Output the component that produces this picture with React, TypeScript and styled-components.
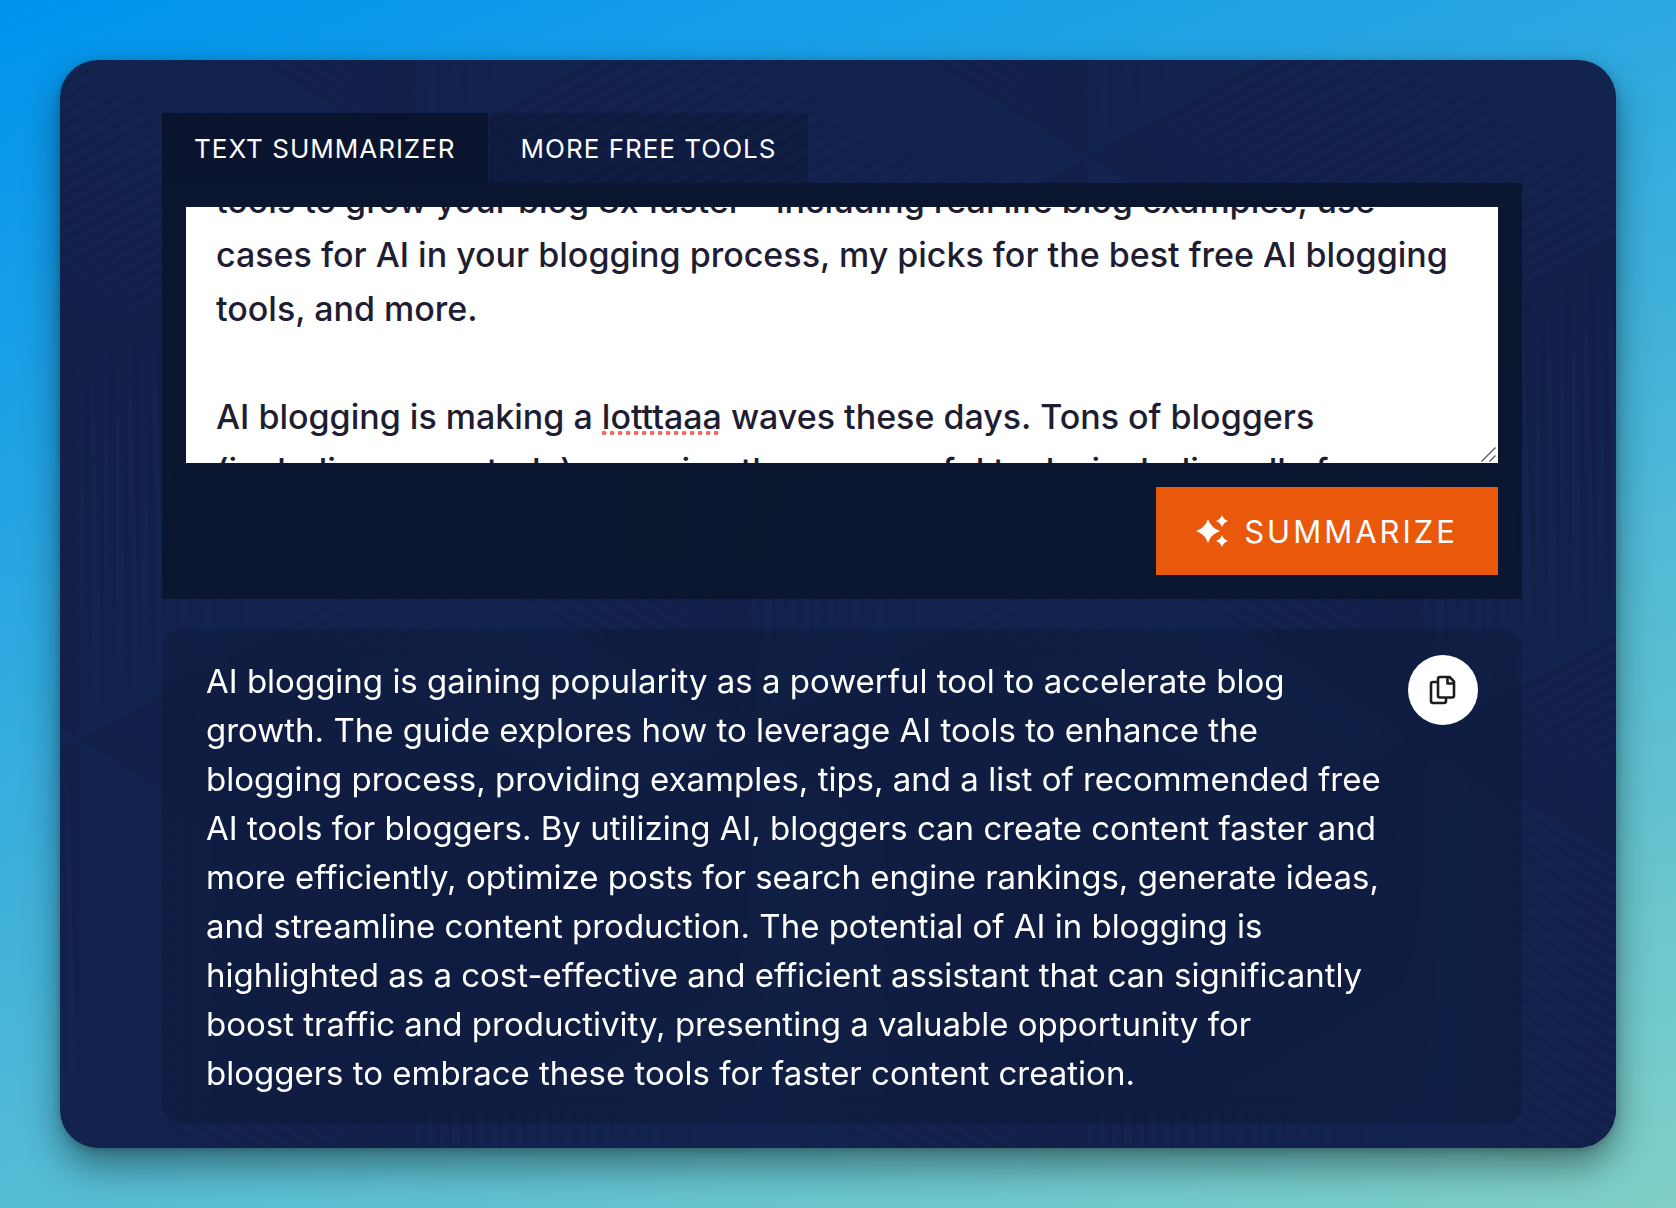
import React, { useLayoutEffect, useRef, useState } from "react";
import styled, { createGlobalStyle } from "styled-components";

const GlobalStyle = createGlobalStyle`
  *, *::before, *::after { box-sizing: border-box; }
  body {
    margin: 0;
    font-family: Inter, "Liberation Sans", sans-serif;
  }
`;

const Page = styled.div`
  min-height: 100vh;
  padding: 60px;
  background: linear-gradient(160deg, #0093ee 0%, #80d0c7 100%);
`;

const Card = styled.main`
  position: relative;
  padding: 53px 94px 24px 102px;
  border-radius: 38px;
  background: #13234f;
  box-shadow: 0 18px 36px rgba(0, 0, 0, 0.42), 0 2px 8px rgba(0, 0, 0, 0.2);
`;

const Backdrop = styled.svg`
  position: absolute;
  inset: 0;
  width: 100%;
  height: 100%;
  border-radius: 38px;
`;

const Content = styled.div`
  position: relative;
`;

const Tabs = styled.nav`
  display: flex;
  gap: 1px;
`;

const Tab = styled.a<{ $active?: boolean }>`
  padding: 2px 32px 0;
  font-size: 26px;
  line-height: 68px;
  letter-spacing: 1px;
  text-transform: uppercase;
  text-decoration: none;
  white-space: nowrap;
  color: #fff;
  background: ${(p) => (p.$active ? "rgba(4, 10, 22, 0.55)" : "rgba(4, 12, 20, 0.18)")};
`;

const Panel = styled.form`
  display: flex;
  flex-direction: column;
  align-items: flex-end;
  gap: 24px;
  padding: 24px;
  background: rgba(4, 12, 20, 0.5);
  backdrop-filter: blur(20px);
`;

const Editor = styled.div`
  position: relative;
  width: 100%;
  overflow: hidden;
  background: #fff;
`;

const Source = styled.textarea`
  display: block;
  width: 100%;
  height: 256px;
  padding: 24px 30px;
  border: 0;
  outline: 0;
  resize: vertical;
  scrollbar-width: none;
  font-family: inherit;
  font-size: 34px;
  font-weight: 500;
  line-height: 54px;
  color: #201d33;
  background: transparent;
`;

const SpellingMark = styled.span`
  position: absolute;
  height: 4px;
  background: radial-gradient(circle at 2px 2px, #ee6f6a 2px, transparent 3px) 0 0 / 8px 4px repeat-x;
  pointer-events: none;
`;

const Grip = styled.svg`
  position: absolute;
  right: 0;
  bottom: 0;
  background: #fff;
  pointer-events: none;
`;

const SubmitButton = styled.button`
  display: flex;
  align-items: center;
  gap: 16px;
  height: 88px;
  padding: 0 40px;
  border: 0;
  font-family: inherit;
  font-size: 31px;
  letter-spacing: 3px;
  text-transform: uppercase;
  color: #fff;
  background: #ea580c;
  cursor: pointer;
`;

const Result = styled.section`
  display: flex;
  align-items: flex-start;
  justify-content: space-between;
  gap: 16px;
  margin-top: 30px;
  padding: 26px 44px;
  border-radius: 20px;
  background: rgba(4, 12, 20, 0.16);
  backdrop-filter: blur(14px);
`;

const Summary = styled.p`
  margin: 0;
  padding-top: 2px;
  font-size: 33px;
  line-height: 49px;
  color: #fff;
`;

const CopyButton = styled.button`
  display: flex;
  flex: none;
  align-items: center;
  justify-content: center;
  width: 70px;
  height: 70px;
  padding: 0;
  border: 0;
  border-radius: 50%;
  color: #1c1c1e;
  background: #fff;
  cursor: pointer;
`;

const HALF = 336;
const RISE = 194;
const STRIPES = 27;

type Point = [number, number];

// Tapered stripes running from the shaded edge (a-b) to the lit edge (c-d).
function stripes(a: Point, b: Point, c: Point, d: Point): string {
  const at = (p: Point, q: Point, t: number) =>
    `${(p[0] + (q[0] - p[0]) * t).toFixed(1)} ${(p[1] + (q[1] - p[1]) * t).toFixed(1)}`;
  let path = "";
  for (let i = 0; i < STRIPES; i++) {
    const t0 = i / STRIPES;
    const t1 = (i + 1) / STRIPES;
    path += `M${at(a, b, t0)}L${at(a, b, t1)}L${at(c, d, t1)}Z`;
  }
  return path;
}

const UPRIGHT = stripes([0, -2 * RISE], [HALF, -3 * RISE], [0, 0], [HALF, -RISE]);
const FALLING = stripes([0, 0], [0, -2 * RISE], [-HALF, -RISE], [-HALF, -3 * RISE]);
const RISING = stripes([0, 0], [HALF, RISE], [HALF, -RISE], [2 * HALF, 0]);
const CELL = UPRIGHT + FALLING + RISING;

const NODES: Point[] = [];
for (let row = 0; row <= 4; row++) {
  for (let col = -1; col <= 2; col++) {
    NODES.push([col * 2 * HALF + (row % 2 ? HALF : 0), row * 3 * RISE]);
  }
}

function GeometricBackdrop() {
  return (
    <Backdrop aria-hidden="true">
      <defs>
        <pattern
          id="facets"
          width={2 * HALF}
          height={6 * RISE}
          patternUnits="userSpaceOnUse"
          patternTransform="translate(355 97)"
        >
          {NODES.map(([x, y]) => (
            <path key={`${x}:${y}`} d={CELL} transform={`translate(${x} ${y})`} fill="#111f49" />
          ))}
        </pattern>
      </defs>
      <rect width="100%" height="100%" fill="url(#facets)" />
    </Backdrop>
  );
}

function SparkleIcon() {
  return (
    <svg width="32" height="32" viewBox="0 0 32 32" fill="currentColor" aria-hidden="true">
      <path d="M12 4Q15 13 24 16Q15 19 12 28Q9 19 0 16Q9 13 12 4Z" />
      <path d="M26 0Q27.5 4.5 32 6Q27.5 7.5 26 12Q24.5 7.5 20 6Q24.5 4.5 26 0Z" />
      <path d="M26 20Q27.5 24.5 32 26Q27.5 27.5 26 32Q24.5 27.5 20 26Q24.5 24.5 26 20Z" />
    </svg>
  );
}

function CopyIcon() {
  return (
    <svg
      width="28"
      height="30"
      viewBox="0 0 28 30"
      fill="none"
      stroke="currentColor"
      strokeWidth="2.6"
      strokeLinejoin="round"
      aria-hidden="true"
    >
      <path d="M9 7H4Q2 7 2 9V26Q2 28 4 28H15Q17 28 17 26V22.5" />
      <path d="M11 2H20.5L25 6.5V20.5Q25 22.5 23 22.5H11Q9 22.5 9 20.5V4Q9 2 11 2Z" />
      <path d="M18.5 2.5V8.5H24.5" />
    </svg>
  );
}

const LINE_START = "AI blogging is making a ";
const TYPO = "lotttaaa";
const TYPO_LINE = 4;
const ARTICLE =
  "tools to grow your blog 8x faster—including real life blog examples, use cases for AI in your blogging process, my picks for the best free AI blogging tools, and more.\n\n" +
  LINE_START +
  TYPO +
  " waves these days. Tons of bloggers (including yours truly) are using these powerful tools, including all of";

const SUMMARY =
  "AI blogging is gaining popularity as a powerful tool to accelerate blog growth. The guide explores how to leverage AI tools to enhance the blogging process, providing examples, tips, and a list of recommended free AI tools for bloggers. By utilizing AI, bloggers can create content faster and more efficiently, optimize posts for search engine rankings, generate ideas, and streamline content production. The potential of AI in blogging is highlighted as a cost-effective and efficient assistant that can significantly boost traffic and productivity, presenting a valuable opportunity for bloggers to embrace these tools for faster content creation.";

const INITIAL_SCROLL = 57;
const PADDING_X = 30;
const PADDING_Y = 24;
const LINE_HEIGHT = 54;
const MARK_OFFSET = 41;

export default function App() {
  const [text, setText] = useState(ARTICLE);
  const [scroll, setScroll] = useState(INITIAL_SCROLL);
  const [word, setWord] = useState({ left: 0, width: 0 });
  const source = useRef<HTMLTextAreaElement>(null);

  useLayoutEffect(() => {
    const area = source.current;
    if (!area) return;
    area.scrollTop = INITIAL_SCROLL;
    const context = document.createElement("canvas").getContext("2d");
    if (!context) return;
    const style = getComputedStyle(area);
    context.font = `${style.fontWeight} ${style.fontSize} ${style.fontFamily}`;
    setWord({
      left: PADDING_X + context.measureText(LINE_START).width,
      width: context.measureText(TYPO).width,
    });
  }, []);

  return (
    <>
      <GlobalStyle />
      <Page>
        <Card>
          <GeometricBackdrop />
          <Content>
            <Tabs>
              <Tab href="#summarizer" $active aria-current="page">
                Text Summarizer
              </Tab>
              <Tab href="#tools">More Free Tools</Tab>
            </Tabs>
            <Panel onSubmit={(e) => e.preventDefault()}>
              <Editor>
                <Source
                  aria-label="Text to summarize"
                  ref={source}
                  value={text}
                  spellCheck={false}
                  onScroll={(e) => setScroll(e.currentTarget.scrollTop)}
                  onChange={(e) => setText(e.target.value)}
                />
                {text === ARTICLE && (
                  <SpellingMark
                    style={{
                      left: word.left,
                      width: word.width,
                      top: PADDING_Y + TYPO_LINE * LINE_HEIGHT + MARK_OFFSET - scroll,
                    }}
                  />
                )}
                <Grip width="18" height="18" viewBox="0 0 18 18" aria-hidden="true">
                  <path d="M1.5 16.5L15.5 2.5M9.5 16.5L15.5 10.5" stroke="#555" strokeWidth="1.3" />
                </Grip>
              </Editor>
              <SubmitButton type="submit">
                <SparkleIcon />
                Summarize
              </SubmitButton>
            </Panel>
            <Result>
              <Summary>{SUMMARY}</Summary>
              <CopyButton type="button" aria-label="Copy">
                <CopyIcon />
              </CopyButton>
            </Result>
          </Content>
        </Card>
      </Page>
    </>
  );
}
